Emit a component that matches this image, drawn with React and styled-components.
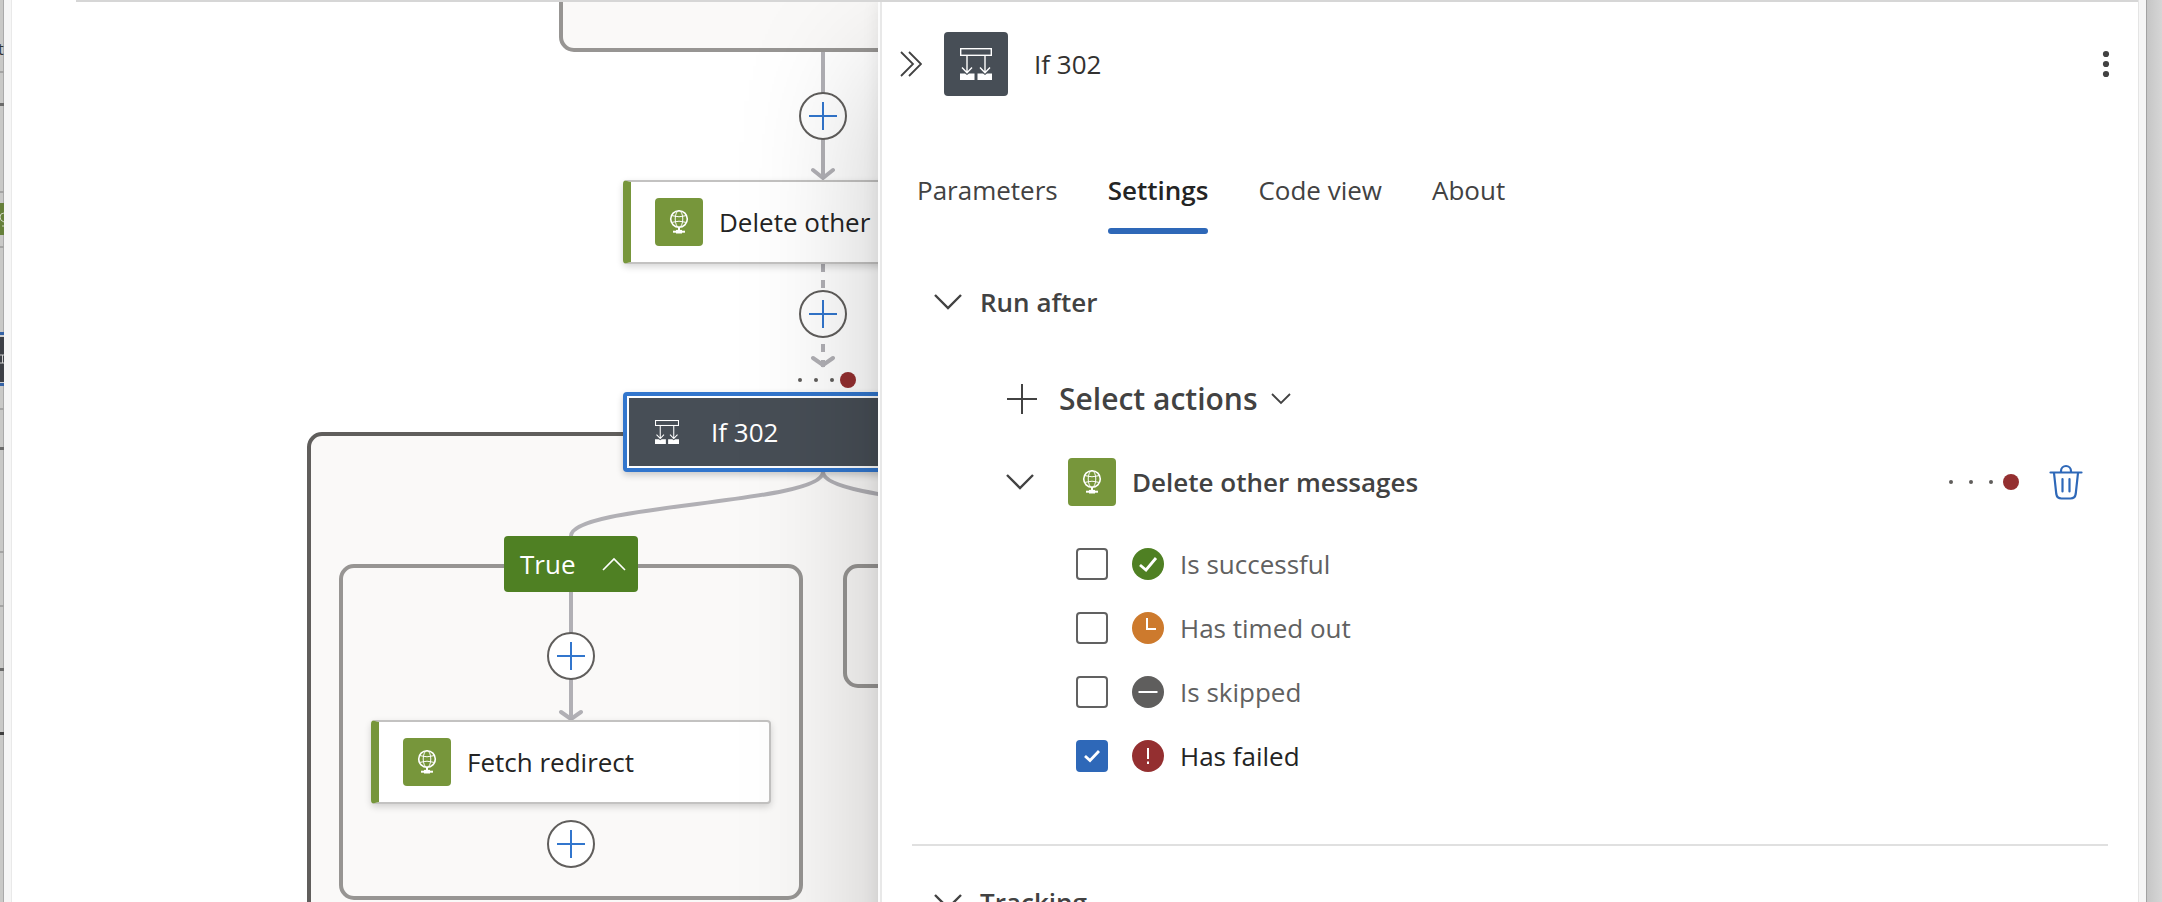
import { useState } from "react"
import styled, { createGlobalStyle } from "styled-components"

const colorBlue = "#2e68b8"
const colorHttp = "#77963b"
const colorControl = "#474e56"
const colorFailed = "#942f30"
const colorEdge = "#b1b0b5"

const GlobalStyle = createGlobalStyle`
  * {
    box-sizing: border-box;
  }
  body {
    margin: 0;
    background: #fff;
    font-family: "Open Sans", "Noto Sans", sans-serif;
    font-size: 26px;
    line-height: 36px;
    color: #242424;
  }
  button {
    font: inherit;
    color: inherit;
    background: none;
    border: 0;
    padding: 0;
    cursor: pointer;
  }
  svg {
    display: block;
  }
`

const Shell = styled.div`
  display: flex;
  height: 100vh;
  overflow: hidden;
`

const LeftStrip = styled.div`
  position: relative;
  z-index: 2;
  flex: 0 0 12px;
  overflow: hidden;
  background: linear-gradient(90deg, #c9c9c7 0 3px, #aaa 3px 4px, #f6f6f6 4px 11px, #e9e9e9 11px);
`

const RightStrip = styled.div`
  position: relative;
  z-index: 2;
  flex: 0 0 24px;
  background: linear-gradient(90deg, #e4e4e4 0 1px, #f6f6f6 1px 8px, #a2a2a2 8px 9px, #c6c6c6 9px, #d6d6d6 24px);
`

const Main = styled.main`
  flex: 1;
  min-width: 0;
`

const TopRule = styled.div`
  position: relative;
  z-index: 2;
  height: 2px;
  margin-left: 64px;
  background: #d6d6d6;
`

const Workspace = styled.div`
  display: grid;
  grid-template-columns: 866fr 1260fr;
`

/* ---------- designer canvas ---------- */

const Canvas = styled.section`
  position: relative;
  overflow: hidden;
  background: #fff;
`

const Scope = styled.div`
  position: absolute;
  left: ${({ $x }) => $x}px;
  top: ${({ $y }) => $y}px;
  width: ${({ $w }) => $w}px;
  height: ${({ $h }) => $h}px;
  border: 4px solid ${({ $active }) => ($active ? "#605e5c" : "#979593")};
  border-radius: 15px;
  background: #faf9f8;
`

const Edges = styled.svg`
  position: absolute;
  left: 0;
  top: 0;
  width: 100%;
  height: 100%;
  fill: none;
  stroke: ${colorEdge};
  stroke-width: 4;
`

const Node = styled.button`
  position: absolute;
  left: ${({ $x }) => $x}px;
  top: ${({ $y }) => $y}px;
  display: flex;
  align-items: center;
  width: 400px;
`

const ActionNode = styled(Node)`
  gap: 16px;
  height: 84px;
  padding-left: 24px;
  border: 2px solid #c3c2c1;
  border-left: 8px solid ${colorHttp};
  border-radius: 4px;
  background: #fff;
  box-shadow: 0 3px 7px rgba(0, 0, 0, 0.16);
`

const ConditionNode = styled(Node)`
  gap: 32px;
  height: 80px;
  padding-left: 28px;
  border: 4px solid #3276cd;
  border-radius: 4px;
  color: #fff;
  background: ${colorControl};
  box-shadow: inset 0 0 0 2px #fff, 0 3px 7px rgba(0, 0, 0, 0.2);
`

const BranchLabel = styled.button`
  position: absolute;
  left: ${({ $x }) => $x}px;
  top: ${({ $y }) => $y}px;
  display: flex;
  align-items: center;
  justify-content: space-between;
  width: 134px;
  height: 56px;
  && {
    padding: 0 12px 0 16px;
    color: #fff;
    background: #4f8023;
  }
  border-radius: 4px;
`

const AddCircle = styled.button`
  position: absolute;
  left: ${({ $x }) => $x - 24}px;
  top: ${({ $y }) => $y - 24}px;
  display: grid;
  place-items: center;
  width: 48px;
  height: 48px;
  border: 2px solid #605e5c;
  border-radius: 50%;
  background: #fff;
`

const Tile = styled.span`
  display: grid;
  place-items: center;
  flex: none;
  width: ${({ $size }) => $size}px;
  height: ${({ $size }) => $size}px;
  border-radius: 4px;
  background: ${({ $color }) => $color};
`

/* ---------- details panel ---------- */

const Panel = styled.aside`
  position: relative;
  z-index: 1;
  padding: 30px 30px 120px 32px;
  border-left: 2px solid #fcfcfc;
  background: #fff;
  box-shadow: inset 2px 0 0 #e8e8e8, 0 64px 128px rgba(0, 0, 0, 0.22), 0 0 16px rgba(0, 0, 0, 0.08);
`

const PanelHeader = styled.header`
  display: flex;
  align-items: center;
  margin: 0 -2px 0 -12px;
`

const Collapse = styled.button`
  margin-right: 22px;
`

const PanelTitle = styled.h1`
  flex: 1;
  margin: 0 0 0 26px;
  font-size: 26px;
  font-weight: 400;
  color: #323130;
`

const Kebab = styled.button`
  width: 8px;
`

const TabList = styled.nav`
  display: flex;
  gap: 50px;
  margin: 62px 0 0 5px;
`

const Tab = styled.button`
  height: 76px;
  color: #424242;
  ${({ $selected }) =>
    $selected &&
    `
    && { color: #242424; font-weight: 600; }
    &::after { background: ${colorBlue}; }
  `}
  display: flex;
  flex-direction: column;
  justify-content: space-between;
  padding-top: 14px;
  &::after {
    content: "";
    width: 100%;
    height: 6px;
    border-radius: 3px;
  }
`

const SectionToggle = styled.button`
  display: flex;
  align-items: center;
  gap: 18px;
  && {
    font-weight: 600;
    color: #424242;
  }
`

const Section = styled.section`
  padding: 50px 0 0 22px;
`

const SelectActions = styled.button`
  display: flex;
  align-items: center;
  margin: 61px 0 0 73px;
  && {
    font-size: 30px;
    font-weight: 600;
    color: #424242;
  }
`

const ButtonText = styled.span`
  margin: 0 13px 0 22px;
`

const RunAfterRow = styled.div`
  display: flex;
  align-items: center;
  margin: 41px 25px 0 72px;
`

const RunAfterName = styled.button`
  display: flex;
  align-items: center;
  flex: 1;
  gap: 16px;
  && {
    font-weight: 600;
    color: #424242;
  }
  > svg {
    margin-right: 18px;
  }
`

const DeleteButton = styled.button`
  margin-left: 30px;
`

const Statuses = styled.div`
  display: grid;
  gap: 28px;
  margin: 40px 0 0 142px;
`

const StatusRow = styled.label`
  display: flex;
  align-items: center;
  gap: 16px;
  color: ${({ $checked }) => ($checked ? "#242424" : "#616161")};
`

const CheckBox = styled.span`
  display: grid;
  margin-right: 8px;
  > * {
    grid-area: 1 / 1;
    place-self: center;
  }
  > svg {
    pointer-events: none;
  }
`

const CheckInput = styled.input`
  appearance: none;
  width: 32px;
  height: 32px;
  margin: 0;
  border: 2px solid #616161;
  border-radius: 4px;
  &:checked {
    border-color: ${colorBlue};
    background: ${colorBlue};
  }
`

const Divider = styled.hr`
  height: 2px;
  margin: 70px 0 0;
  border: 0;
  background: #e0e0e0;
`

const TrackingSection = styled.section`
  padding: 38px 0 0 22px;
`

/* ---------- icons ---------- */

const Chevron = ({ width = 28, height = 16, up, stroke = 2.4 }) => (
  <svg width={width} height={height} viewBox={`0 0 ${width} ${height}`} fill="none" stroke="currentColor" strokeWidth={stroke}>
    <path d={up ? `M1 ${height - 1}L${width / 2} 2L${width - 1} ${height - 1}` : `M1 1L${width / 2} ${height - 2}L${width - 1} 1`} />
  </svg>
)

const PlusIcon = ({ size, color }) => (
  <svg width={size} height={size} viewBox={`0 0 ${size} ${size}`} stroke={color} strokeWidth="2">
    <path d={`M0 ${size / 2}H${size}M${size / 2} 0V${size}`} />
  </svg>
)

const GlobeIcon = () => (
  <svg width="48" height="48" viewBox="0 0 48 48" fill="none" stroke="#fff">
    <circle cx="24" cy="21" r="8.3" strokeWidth="1.6" />
    <ellipse cx="24" cy="21" rx="3.8" ry="8.3" strokeWidth="1" />
    <path d="M16.6 17.6Q24 20 31.4 17.6M16.6 24.4Q24 22 31.4 24.4" strokeWidth="1" />
    <path d="M24 29V33" strokeWidth="2" />
    <path d="M18 33.7H30" strokeWidth="2" />
    <path d="M21 33.7H27" strokeWidth="3.6" />
  </svg>
)

const ConditionIcon = ({ size }) => (
  <svg width={size} height={size} viewBox="0 0 32 32" fill="none" stroke="#fff" strokeWidth="1.4">
    <rect x="0.7" y="0.7" width="30.6" height="6.6" />
    <path d="M7 7.5V24.5M25 7.5V24.5M2 19.5L7 24.7L12 19.5M20 19.5L25 24.7L30 19.5" />
    <path d="M0 25.5H5L7 27L9 25.5H14.5V32H0ZM17.5 25.5H23L25 27L27 25.5H32V32H17.5Z" fill="#fff" stroke="none" />
  </svg>
)

const DoubleChevron = () => (
  <svg width="22" height="26" viewBox="0 0 22 26" fill="none" stroke="#424242" strokeWidth="1.8">
    <path d="M1 1L13 13L1 25M9 1L21 13L9 25" />
  </svg>
)

const KebabIcon = () => (
  <svg width="8" height="28" viewBox="0 0 8 28" fill="#424242">
    <circle cx="4" cy="4" r="3.1" />
    <circle cx="4" cy="14" r="3.1" />
    <circle cx="4" cy="24" r="3.1" />
  </svg>
)

const TrashIcon = () => (
  <svg width="34" height="38" viewBox="0 0 34 38" fill="none" stroke={colorBlue} strokeWidth="2.2" strokeLinecap="round">
    <path d="M1.5 9.5H32.5" />
    <path d="M12 9V8A5 5 0 0 1 22 8V9" />
    <path d="M5 10L7.3 31Q8 35.5 12.5 35.5H21.5Q26 35.5 26.7 31L29 10" />
    <path d="M13.5 16V28.5M20.5 16V28.5" />
  </svg>
)

const RunAfterDots = ({ step }) => (
  <svg width={step * 3 + 12} height="16" viewBox={`0 0 ${step * 3 + 12} 16`}>
    {[0, 1, 2].map((i) => (
      <circle key={i} cx={4 + i * step} cy="8" r="2" fill="#605e5c" />
    ))}
    <circle cx={4 + step * 3} cy="8" r="8" fill={colorFailed} />
  </svg>
)

const badges = {
  succeeded: { color: "#4f8023", d: "M8 17L14 22L24 10", width: 2.8 },
  timedOut: { color: "#cd7a2d", d: "M15 6V17H24", width: 2 },
  skipped: { color: "#5f5e5d", d: "M6.5 16H25.5", width: 2 },
  failed: { color: colorFailed, d: "M16 8V19M16 21.5V24", width: 2 },
}

const StatusBadge = ({ type }) => (
  <svg width="32" height="32" viewBox="0 0 32 32" fill="none">
    <circle cx="16" cy="16" r="16" fill={badges[type].color} />
    <path d={badges[type].d} stroke="#fff" strokeWidth={badges[type].width} />
  </svg>
)

// sliver of the dimmed page that shows behind the window
const BackgroundSliver = () => (
  <svg width="4" height="902" viewBox="0 0 4 902">
    <g fill="#a5a5a4">
      <rect y="71" width="4" height="2" />
      <rect y="191" width="4" height="2" />
      <rect y="246" width="4" height="2" />
      <rect y="408" width="4" height="2" />
      <rect y="551" width="4" height="2" />
      <rect y="605" width="4" height="2" />
    </g>
    <g fill="#6b6b6a">
      <rect y="103" width="4" height="3" />
      <rect y="447" width="4" height="3" />
      <rect y="668" width="4" height="3" />
    </g>
    <rect y="732" width="4" height="3" fill="#3f3f3f" />
    <rect y="203" width="4" height="32" fill="#66803a" />
    <path d="M4 213Q0 213 0 217T4 222M2 226H4" stroke="#cfd6c2" fill="none" />
    <rect y="332" width="4" height="54" fill="#3462a5" />
    <rect y="335" width="4" height="48" fill="#d0d0d0" />
    <rect y="337" width="4" height="45" fill="#3d4046" />
    <path d="M0 355H4M0 363H4M2.5 355V363" stroke="#cfcfcf" fill="none" />
    <text x="-2" y="55" fontSize="16" fill="#333">t</text>
  </svg>
)

const tabs = ["Parameters", "Settings", "Code view", "About"]

const statuses = [
  { type: "succeeded", label: "Is successful" },
  { type: "timedOut", label: "Has timed out" },
  { type: "skipped", label: "Is skipped" },
  { type: "failed", label: "Has failed" },
]

const DotsOnNode = styled.div`
  position: absolute;
  left: ${({ $x }) => $x}px;
  top: ${({ $y }) => $y}px;
`

const HttpTile = () => (
  <Tile $size={48} $color={colorHttp}>
    <GlobeIcon />
  </Tile>
)

const AddStep = ({ x, y }) => (
  <AddCircle $x={x} $y={y} aria-label="Add an action">
    <PlusIcon size={28} color="#3276cd" />
  </AddCircle>
)

const Designer = () => (
  <Canvas>
    <Scope $x={547} $y={-40} $w={528} $h={90} />
    <Scope $x={295} $y={430} $w={1032} $h={620} $active />
    <Scope $x={327} $y={562} $w={464} $h={336} />
    <Scope $x={831} $y={562} $w={464} $h={124} />
    <Edges>
      <path d="M811 50V176M559 590V716" />
      <path d="M811 262V365" strokeDasharray="8 8" />
      <path d="M811 470C811 502 559 502 559 534M811 470C811 502 1063 502 1063 534" />
      <path d="M801 168L811 176L821 168M801 356L811 363L821 356M549 710L559 717L569 710" strokeLinecap="round" />
    </Edges>
    <AddStep x={811} y={114} />
    <ActionNode $x={611} $y={178}>
      <HttpTile />
      Delete other messages
    </ActionNode>
    <AddStep x={811} y={312} />
    <DotsOnNode $x={784} $y={370}>
      <RunAfterDots step={16} />
    </DotsOnNode>
    <ConditionNode $x={611} $y={390}>
      <ConditionIcon size={24} />
      If 302
    </ConditionNode>
    <BranchLabel $x={492} $y={534}>
      True
      <Chevron up width={24} height={14} stroke={1.6} />
    </BranchLabel>
    <AddStep x={559} y={654} />
    <ActionNode $x={359} $y={718}>
      <HttpTile />
      Fetch redirect
    </ActionNode>
    <AddStep x={559} y={842} />
  </Canvas>
)

const Details = () => {
  const [tab, setTab] = useState("Settings")
  const [checked, setChecked] = useState({ failed: true })

  return (
    <Panel>
      <PanelHeader>
        <Collapse aria-label="Collapse panel">
          <DoubleChevron />
        </Collapse>
        <Tile $size={64} $color={colorControl}>
          <ConditionIcon size={32} />
        </Tile>
        <PanelTitle>If 302</PanelTitle>
        <Kebab aria-label="More commands">
          <KebabIcon />
        </Kebab>
      </PanelHeader>
      <TabList>
        {tabs.map((name) => (
          <Tab key={name} $selected={name === tab} onClick={() => setTab(name)}>
            {name}
          </Tab>
        ))}
      </TabList>
      <Section>
        <SectionToggle>
          <Chevron />
          Run after
        </SectionToggle>
        <SelectActions>
          <PlusIcon size={30} color="#424242" />
          <ButtonText>Select actions</ButtonText>
          <Chevron width={20} height={12} stroke={1.8} />
        </SelectActions>
        <RunAfterRow>
          <RunAfterName>
            <Chevron />
            <HttpTile />
            Delete other messages
          </RunAfterName>
          <RunAfterDots step={20} />
          <DeleteButton aria-label="Delete">
            <TrashIcon />
          </DeleteButton>
        </RunAfterRow>
        <Statuses>
          {statuses.map(({ type, label }) => (
            <StatusRow key={type} $checked={!!checked[type]}>
              <CheckBox>
                <CheckInput
                  type="checkbox"
                  checked={!!checked[type]}
                  onChange={(e) => setChecked({ ...checked, [type]: e.target.checked })}
                />
                {checked[type] && (
                  <svg width="16" height="14" viewBox="0 0 16 14" fill="none" stroke="#fff" strokeWidth="2.8">
                    <path d="M1 7L6 11.5L15 2" />
                  </svg>
                )}
              </CheckBox>
              <StatusBadge type={type} />
              {label}
            </StatusRow>
          ))}
        </Statuses>
      </Section>
      <Divider />
      <TrackingSection>
        <SectionToggle>
          <Chevron />
          Tracking
        </SectionToggle>
      </TrackingSection>
    </Panel>
  )
}

const App = () => (
  <>
    <GlobalStyle />
    <Shell>
      <LeftStrip>
        <BackgroundSliver />
      </LeftStrip>
      <Main>
        <TopRule />
        <Workspace>
          <Designer />
          <Details />
        </Workspace>
      </Main>
      <RightStrip />
    </Shell>
  </>
)

export default App
